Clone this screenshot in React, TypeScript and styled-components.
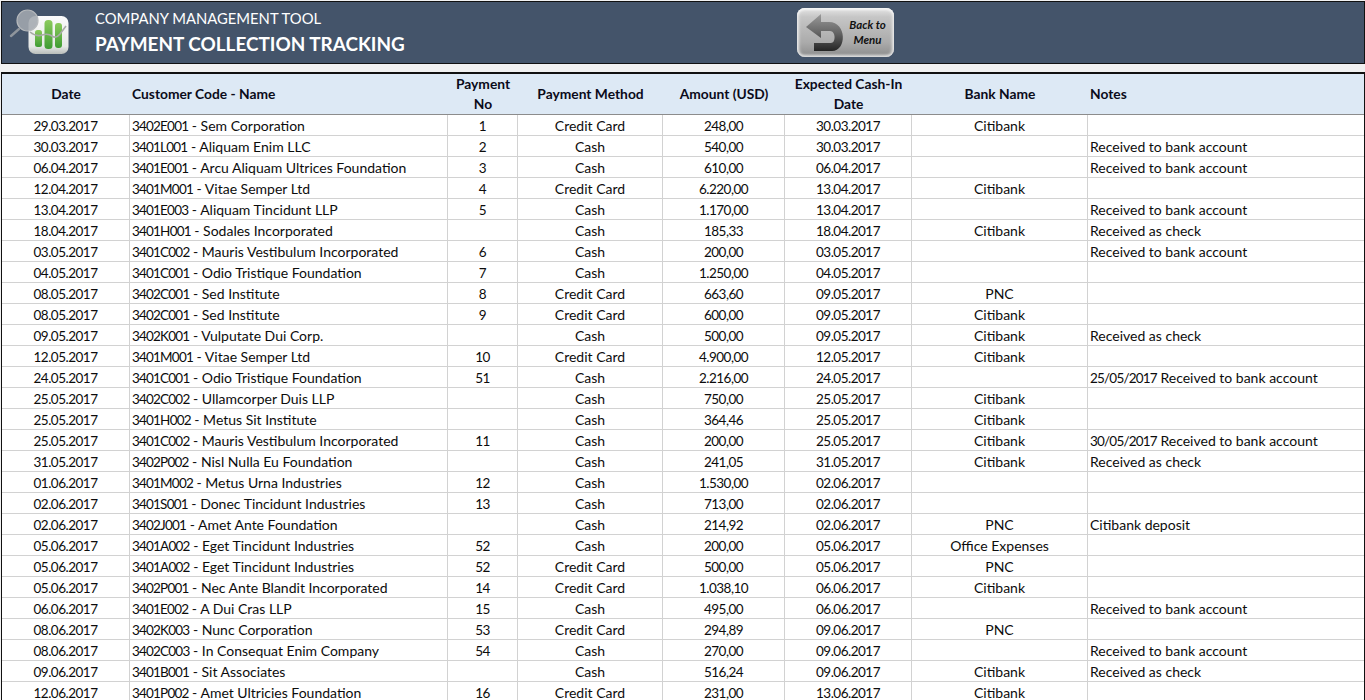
import React from "react";
import styled, { createGlobalStyle } from "styled-components";

const Global = createGlobalStyle`
  html, body { margin: 0; padding: 0; height: 700px; overflow: hidden; background: #f1f1f1; }
  body { font-family: Lato, "Noto Sans", sans-serif; color: #0c0c0c; }
`;

const Page = styled.div`
  height: 700px;
  overflow: hidden;
  padding-top: 1px;
  box-sizing: border-box;
`;

const Banner = styled.header`
  height: 63px;
  margin: 0 0 8px 1px;
  box-sizing: border-box;
  border: 1px solid #111;
  background: #44546a;
  display: flex;
  align-items: flex-start;
`;

const LogoSlot = styled.div`
  width: 93px;
  height: 61px;
  flex: none;
`;

const Titles = styled.div`
  width: 700px;
  flex: none;
  color: #fff;
  padding-top: 5px;
`;

const Subtitle = styled.div`
  font-size: 14.8px;
  line-height: 22px;
`;

const Title = styled.div`
  font-size: 18.9px;
  line-height: 29px;
  font-weight: 700;
`;

const BackButton = styled.button`
  margin: 6px 0 0 2px;
  width: 97px;
  height: 49px;
  padding: 0 0 2px 44px;
  border: 0;
  border-radius: 8px;
  background: linear-gradient(180deg, #e6e6e6 0%, #c6c6c6 18%, #ababab 70%, #949494 92%, #cfcfcf 100%);
  box-shadow: inset 0 2px 2px #f5f5f5, inset 2px 0 3px #e2e2e2, inset -2px 0 3px #e2e2e2;
  position: relative;
  color: #111;
  font: italic 700 11.5px/15px Lato, sans-serif;
  text-align: center;
`;

const BackArrow = styled.svg`
  position: absolute;
  left: 7px;
  top: 3px;
`;

const Sheet = styled.div`
  margin-left: 1px;
  border-top: 2px solid #111;
  border-left: 1px solid #111;
  border-right: 1px solid #111;
  background: #fff;
`;

const Table = styled.table`
  table-layout: fixed;
  width: 1362px;
  border-collapse: separate;
  border-spacing: 0;
  font-size: 14px;
`;

const HeadRow = styled.tr`
  height: 41px;
  background: #dde9f5;
`;

const HeadCell = styled.th<{ $left?: boolean }>`
  padding: 0 0 0 ${(p) => (p.$left ? "2px" : "0")};
  border-bottom: 1px solid #8c8c8c;
  font-size: 13.8px;
  font-weight: 700;
  line-height: 20px;
  text-align: ${(p) => (p.$left ? "left" : "center")};
  color: #0b0b1a;
`;

const Row = styled.tr`
  height: 21px;
`;

const Cell = styled.td<{ $left?: boolean; $num?: boolean }>`
  box-sizing: border-box;
  height: 21px;
  padding: 2px 0 0 ${(p) => (p.$left ? "2px" : "0")};
  border-right: 1px solid #d2d2d2;
  border-bottom: 1px solid #d2d2d2;
  line-height: 18px;
  white-space: nowrap;
  overflow: hidden;
  text-align: ${(p) => (p.$left ? "left" : "center")};
  font-size: ${(p) => (p.$num ? "13.5px" : "inherit")};
  letter-spacing: ${(p) => (p.$num ? "-0.5px" : "normal")};
`;

const NoteCell = styled(Cell)`
  border-right: 0;
`;

const Code = styled.span`
  font-size: 13.5px;
  letter-spacing: -0.8px;
`;

const widths = [128, 318, 70, 145, 122, 127, 176, 276];

const rows: string[][] = [
  ["29.03.2017", "3402E001 - Sem Corporation", "1", "Credit Card", "248,00", "30.03.2017", "Citibank", ""],
  ["30.03.2017", "3401L001 - Aliquam Enim LLC", "2", "Cash", "540,00", "30.03.2017", "", "Received to bank account"],
  ["06.04.2017", "3401E001 - Arcu Aliquam Ultrices Foundation", "3", "Cash", "610,00", "06.04.2017", "", "Received to bank account"],
  ["12.04.2017", "3401M001 - Vitae Semper Ltd", "4", "Credit Card", "6.220,00", "13.04.2017", "Citibank", ""],
  ["13.04.2017", "3401E003 - Aliquam Tincidunt LLP", "5", "Cash", "1.170,00", "13.04.2017", "", "Received to bank account"],
  ["18.04.2017", "3401H001 - Sodales Incorporated", "", "Cash", "185,33", "18.04.2017", "Citibank", "Received as check"],
  ["03.05.2017", "3401C002 - Mauris Vestibulum Incorporated", "6", "Cash", "200,00", "03.05.2017", "", "Received to bank account"],
  ["04.05.2017", "3401C001 - Odio Tristique Foundation", "7", "Cash", "1.250,00", "04.05.2017", "", ""],
  ["08.05.2017", "3402C001 - Sed Institute", "8", "Credit Card", "663,60", "09.05.2017", "PNC", ""],
  ["08.05.2017", "3402C001 - Sed Institute", "9", "Credit Card", "600,00", "09.05.2017", "Citibank", ""],
  ["09.05.2017", "3402K001 - Vulputate Dui Corp.", "", "Cash", "500,00", "09.05.2017", "Citibank", "Received as check"],
  ["12.05.2017", "3401M001 - Vitae Semper Ltd", "10", "Credit Card", "4.900,00", "12.05.2017", "Citibank", ""],
  ["24.05.2017", "3401C001 - Odio Tristique Foundation", "51", "Cash", "2.216,00", "24.05.2017", "", "25/05/2017 Received to bank account"],
  ["25.05.2017", "3402C002 - Ullamcorper Duis LLP", "", "Cash", "750,00", "25.05.2017", "Citibank", ""],
  ["25.05.2017", "3401H002 - Metus Sit Institute", "", "Cash", "364,46", "25.05.2017", "Citibank", ""],
  ["25.05.2017", "3401C002 - Mauris Vestibulum Incorporated", "11", "Cash", "200,00", "25.05.2017", "Citibank", "30/05/2017 Received to bank account"],
  ["31.05.2017", "3402P002 - Nisl Nulla Eu Foundation", "", "Cash", "241,05", "31.05.2017", "Citibank", "Received as check"],
  ["01.06.2017", "3401M002 - Metus Urna Industries", "12", "Cash", "1.530,00", "02.06.2017", "", ""],
  ["02.06.2017", "3401S001 - Donec Tincidunt Industries", "13", "Cash", "713,00", "02.06.2017", "", ""],
  ["02.06.2017", "3402J001 - Amet Ante Foundation", "", "Cash", "214,92", "02.06.2017", "PNC", "Citibank deposit"],
  ["05.06.2017", "3401A002 - Eget Tincidunt Industries", "52", "Cash", "200,00", "05.06.2017", "Office Expenses", ""],
  ["05.06.2017", "3401A002 - Eget Tincidunt Industries", "52", "Credit Card", "500,00", "05.06.2017", "PNC", ""],
  ["05.06.2017", "3402P001 - Nec Ante Blandit Incorporated", "14", "Credit Card", "1.038,10", "06.06.2017", "Citibank", ""],
  ["06.06.2017", "3401E002 - A Dui Cras LLP", "15", "Cash", "495,00", "06.06.2017", "", "Received to bank account"],
  ["08.06.2017", "3402K003 - Nunc Corporation", "53", "Credit Card", "294,89", "09.06.2017", "PNC", ""],
  ["08.06.2017", "3402C003 - In Consequat Enim Company", "54", "Cash", "270,00", "09.06.2017", "", "Received to bank account"],
  ["09.06.2017", "3401B001 - Sit Associates", "", "Cash", "516,24", "09.06.2017", "Citibank", "Received as check"],
  ["12.06.2017", "3401P002 - Amet Ultricies Foundation", "16", "Credit Card", "231,00", "13.06.2017", "Citibank", ""],
];

function AppLogo() {
  return (
    <svg width="93" height="61" viewBox="0 0 93 61" style={{ display: "block" }}>
      <defs>
        <linearGradient id="tile" x1="0" y1="0" x2="0" y2="1">
          <stop offset="0" stopColor="#fbfbfb" />
          <stop offset="0.8" stopColor="#e6e8e6" />
          <stop offset="1" stopColor="#b9bdba" />
        </linearGradient>
        <linearGradient id="bar" x1="0" y1="0" x2="0" y2="1">
          <stop offset="0" stopColor="#8ccb5c" />
          <stop offset="1" stopColor="#3f9c33" />
        </linearGradient>
      </defs>
      <rect x="26.5" y="14" width="40" height="38" rx="7" fill="url(#tile)" />
      <rect x="33" y="28" width="7" height="17" rx="2.5" fill="url(#bar)" />
      <rect x="42.5" y="18" width="8" height="29" rx="3.5" fill="url(#bar)" />
      <rect x="53" y="21" width="7" height="25" rx="3" fill="url(#bar)" />
      <path d="M28 30 Q34 35 40 33 T50 34 T58 32 L64 24" fill="none" stroke="#a8aba6" strokeWidth="1.6" />
      <circle cx="25.5" cy="18.5" r="10.5" fill="#a3a8af" fillOpacity="0.88" stroke="#b6b9bc" strokeWidth="1.2" />
      <path d="M17 27 L9 34" stroke="#8f959c" strokeWidth="2.4" strokeLinecap="round" />
    </svg>
  );
}

function BackIcon() {
  return (
    <BackArrow width="44" height="44" viewBox="0 0 44 44">
      <defs>
        <linearGradient id="arrowFill" x1="0" y1="0" x2="0" y2="1">
          <stop offset="0" stopColor="#9a9a9a" />
          <stop offset="0.5" stopColor="#666" />
          <stop offset="1" stopColor="#242424" />
        </linearGradient>
      </defs>
      <path
        d="M2 16 L17 3 L17 11 L25 11 C43 11 43 40 28 40 L10 40 L10 32 L27 32 C32 32 32 20 26 20 L17 20 L17 27 Z"
        fill="url(#arrowFill)"
      />
    </BackArrow>
  );
}

function CustomerName({ value }: { value: string }) {
  const [code, name] = value.split(" - ");
  return (
    <>
      <Code>{code}</Code> - {name}
    </>
  );
}

function Note({ value }: { value: string }) {
  const match = value.match(/^(\d\d\/\d\d\/\d{4}) (.*)$/);
  if (!match) return <>{value}</>;
  return (
    <>
      <Code>{match[1]}</Code> {match[2]}
    </>
  );
}

export default function App() {
  return (
    <Page>
      <Global />
      <Banner>
        <LogoSlot>
          <AppLogo />
        </LogoSlot>
        <Titles>
          <Subtitle>COMPANY MANAGEMENT TOOL</Subtitle>
          <Title>PAYMENT COLLECTION TRACKING</Title>
        </Titles>
        <BackButton>
          <BackIcon />
          Back to
          <br />
          Menu
        </BackButton>
      </Banner>
      <Sheet>
        <Table>
          <colgroup>
            {widths.map((w, i) => (
              <col key={i} style={{ width: w }} />
            ))}
          </colgroup>
          <thead>
            <HeadRow>
              <HeadCell>Date</HeadCell>
              <HeadCell $left>Customer Code - Name</HeadCell>
              <HeadCell>
                Payment
                <br />
                No
              </HeadCell>
              <HeadCell>Payment Method</HeadCell>
              <HeadCell>Amount (USD)</HeadCell>
              <HeadCell>
                Expected Cash-In
                <br />
                Date
              </HeadCell>
              <HeadCell>Bank Name</HeadCell>
              <HeadCell $left>Notes</HeadCell>
            </HeadRow>
          </thead>
          <tbody>
            {rows.map((r, i) => (
              <Row key={i}>
                <Cell $num>{r[0]}</Cell>
                <Cell $left>
                  <CustomerName value={r[1]} />
                </Cell>
                <Cell $num>{r[2]}</Cell>
                <Cell>{r[3]}</Cell>
                <Cell $num>{r[4]}</Cell>
                <Cell $num>{r[5]}</Cell>
                <Cell>{r[6]}</Cell>
                <NoteCell $left>
                  <Note value={r[7]} />
                </NoteCell>
              </Row>
            ))}
          </tbody>
        </Table>
      </Sheet>
    </Page>
  );
}
